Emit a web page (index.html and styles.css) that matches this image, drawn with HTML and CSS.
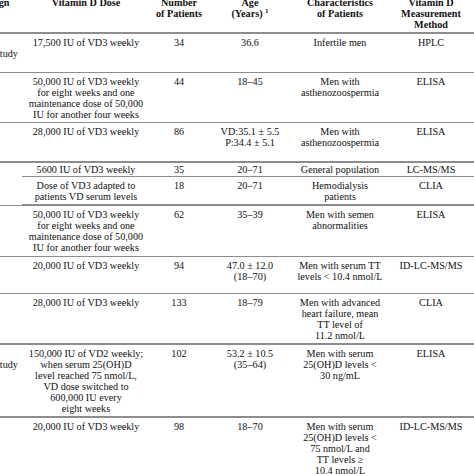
FILE: index.html
```html
<!DOCTYPE html>
<html>
<head>
<meta charset="utf-8">
<link rel="stylesheet" href="styles.css">
</head>
<body>
<table class="tbl">
  <colgroup>
    <col class="w0"><col class="w1"><col class="w2"><col class="w3"><col class="w4"><col class="w5">
  </colgroup>
  <thead>
    <tr>
      <th class="c0">Study Design</th>
      <th>Vitamin D Dose</th>
      <th>Number<br>of Patients</th>
      <th>Age<br>(Years) <sup>1</sup></th>
      <th>Characteristics<br>of Patients</th>
      <th>Vitamin D<br>Measurement<br>Method</th>
    </tr>
  </thead>
  <tbody>
    <tr class="r1">
      <td class="c0">Prospective<br>controlled study</td>
      <td>17,500 IU of VD3 weekly</td>
      <td>34</td>
      <td>36.6</td>
      <td>Infertile men</td>
      <td>HPLC</td>
    </tr>
    <tr class="r2">
      <td class="c0"></td>
      <td>50,000 IU of VD3 weekly<br>for eight weeks and one<br>maintenance dose of 50,000<br>IU for another four weeks</td>
      <td>44</td>
      <td>18–45</td>
      <td>Men with<br>asthenozoospermia</td>
      <td>ELISA</td>
    </tr>
    <tr class="r3 thick">
      <td class="c0"></td>
      <td>28,000 IU of VD3 weekly</td>
      <td>86</td>
      <td>VD:35.1 ± 5.5<br>P:34.4 ± 5.1</td>
      <td>Men with<br>asthenozoospermia</td>
      <td>ELISA</td>
    </tr>
    <tr class="r4">
      <td class="c0 span" rowspan="2"></td>
      <td>5600 IU of VD3 weekly</td>
      <td>35</td>
      <td>20–71</td>
      <td>General population</td>
      <td>LC-MS/MS</td>
    </tr>
    <tr class="r5 thick">
      <td>Dose of VD3 adapted to<br>patients VD serum levels</td>
      <td>18</td>
      <td>20–71</td>
      <td>Hemodialysis<br>patients</td>
      <td>CLIA</td>
    </tr>
    <tr class="r6">
      <td class="c0"></td>
      <td>50,000 IU of VD3 weekly<br>for eight weeks and one<br>maintenance dose of 50,000<br>IU for another four weeks</td>
      <td>62</td>
      <td>35–39</td>
      <td>Men with semen<br>abnormalities</td>
      <td>ELISA</td>
    </tr>
    <tr class="r7">
      <td class="c0"></td>
      <td>20,000 IU of VD3 weekly</td>
      <td>94</td>
      <td>47.0 ± 12.0<br>(18–70)</td>
      <td>Men with serum TT<br>levels &lt; 10.4 nmol/L</td>
      <td>ID-LC-MS/MS</td>
    </tr>
    <tr class="r8 thick">
      <td class="c0"></td>
      <td>28,000 IU of VD3 weekly</td>
      <td>133</td>
      <td>18–79</td>
      <td>Men with advanced<br>heart failure, mean<br>TT level of<br>11.2 nmol/L</td>
      <td>CLIA</td>
    </tr>
    <tr class="r9 thick">
      <td class="c0">Placebo-<br>controlled study</td>
      <td>150,000 IU of VD2 weekly;<br>when serum 25(OH)D<br>level reached 75 nmol/L,<br>VD dose switched to<br>600,000 IU every<br>eight weeks</td>
      <td>102</td>
      <td>53.2 ± 10.5<br>(35–64)</td>
      <td>Men with serum<br>25(OH)D levels &lt;<br>30 ng/mL</td>
      <td>ELISA</td>
    </tr>
    <tr class="r10">
      <td class="c0"></td>
      <td>20,000 IU of VD3 weekly</td>
      <td>98</td>
      <td>18–70</td>
      <td>Men with serum<br>25(OH)D levels &lt;<br>75 nmol/L and<br>TT levels ≥<br>10.4 nmol/L</td>
      <td>ID-LC-MS/MS</td>
    </tr>
  </tbody>
</table>
</body>
</html>
```
FILE: styles.css
```css
html, body {
  margin: 0;
  padding: 0;
  background: #ffffff;
  overflow: hidden;
}

.tbl {
  border-collapse: collapse;
  table-layout: fixed;
  width: 528px;
  margin: -6px 0 0 -54px;
  font-family: "Liberation Serif", "Times New Roman", serif;
  font-size: 10.2px;
  line-height: 11px;
  color: #111111;
}

.w0 { width: 76px; }
.w1 { width: 128px; }
.w2 { width: 58px; }
.w3 { width: 84px; }
.w4 { width: 96px; }
.w5 { width: 86px; }

.tbl th,
.tbl td {
  padding: 3px 0 2px;
  text-align: center;
  vertical-align: top;
  white-space: nowrap;
  overflow: hidden;
}

.tbl th {
  font-weight: bold;
  border-bottom: 2px solid #8d8d8d;
}

.tbl sup {
  font-size: 7px;
  line-height: 0;
  vertical-align: 4px;
}

.tbl td {
  border-bottom: 1px solid #8d8d8d;
}

.tbl .thick td {
  border-bottom: 2px solid #8d8d8d;
}

.tbl .c0 {
  text-align: left;
  padding-left: 6px;
}

.r1 { height: 39px; }
.r2 { height: 50px; }
.r3 { height: 40px; }
.r4 { height: 14px; }
.r4 td { padding-top: 1px; padding-bottom: 0; }
.r5 { height: 29px; }
.r6 { height: 51px; }
.r7 { height: 37px; }
.r8 { height: 51px; }
.r9 { height: 72px; }
.r10 { height: 70px; }
```
